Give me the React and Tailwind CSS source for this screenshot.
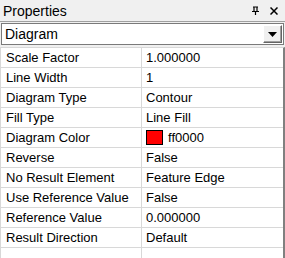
export default function App() {
  const rows = [
    ["Scale Factor", "1.000000"],
    ["Line Width", "1"],
    ["Diagram Type", "Contour"],
    ["Fill Type", "Line Fill"],
    ["Diagram Color", "ff0000", true],
    ["Reverse", "False"],
    ["No Result Element", "Feature Edge"],
    ["Use Reference Value", "False"],
    ["Reference Value", "0.000000"],
    ["Result Direction", "Default"],
    ["", ""],
  ];

  return (
    <div className="w-[285px] h-[258px] overflow-hidden bg-white text-black font-['Liberation_Sans',Arial,sans-serif]">
      {/* TITLE */}
      <div className="h-[22px] bg-[#f0f0f0] border-b border-[#a0a0a0] flex items-center pl-[3px] pr-[7px]">
        <span className="text-[14px] leading-none flex-1">Properties</span>
        <svg width="7" height="9" viewBox="0 0 7 9" className="mr-[11px]">
          <path d="M1 1h5M2 1v5M5 1v5M0 5.5h7M3.5 6v3" stroke="#000" strokeWidth="1.2" fill="none" />
        </svg>
        <svg width="8" height="8" viewBox="0 0 8 8">
          <path d="M0.5 0.5l7 7M7.5 0.5l-7 7" stroke="#000" strokeWidth="1.5" />
        </svg>
      </div>

      {/* COMBO */}
      <div className="px-[1px] pt-[1px] pb-[2px] bg-[#f0f0f0]">
        <div className="h-[22px] bg-white border border-[#7a7a7a] flex items-center pl-[3px] pr-[1px]">
          <span className="text-[14px] leading-none flex-1">Diagram</span>
          <div className="w-[19px] h-[18px] bg-[#f0f0f0] border-t border-l border-white border-r border-b border-r-[#646464] border-b-[#646464] shadow-[inset_-1px_-1px_0_#a0a0a0] flex items-center justify-center">
            <svg width="9" height="5" viewBox="0 0 9 5">
              <path d="M0 0h9L4.5 5z" fill="#000" />
            </svg>
          </div>
        </div>
      </div>

      {/* GRID */}
      <div className="border-t border-[#d8d8d8] border-r-2 border-r-[#808080] border-l border-l-[#d8d8d8]">
        {rows.map(([name, value, color], i) => (
          <div key={i} className="h-[20px] flex border-b border-[#d8d8d8] text-[13px] leading-none">
            <div className="w-[141px] border-r border-[#d8d8d8] flex items-center pl-[5px] whitespace-nowrap">
              {name}
            </div>
            <div className="flex-1 flex items-center pl-[4px] whitespace-nowrap">
              {color && (
                <span className="w-[17px] h-[15px] bg-[#ff0000] border border-black mr-[5px]" />
              )}
              {value}
            </div>
          </div>
        ))}
      </div>
    </div>
  );
}
